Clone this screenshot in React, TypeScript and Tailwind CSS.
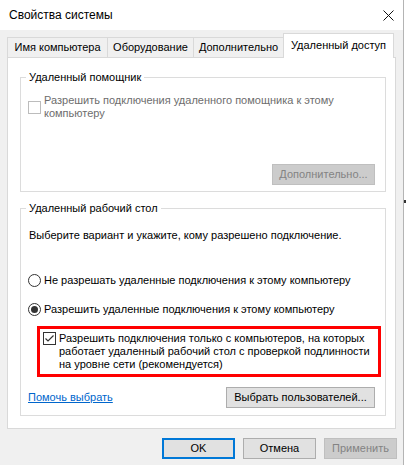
import React from "react";

const font = { fontFamily: '"Liberation Sans", Arial, sans-serif' };

function CheckBox({ checked, disabled }: { checked?: boolean; disabled?: boolean }) {
  return (
    <div
      className={`w-[13px] h-[13px] shrink-0 border bg-white flex items-center justify-center ${
        disabled ? "border-[#bcbcbc]" : "border-[#333333]"
      }`}
    >
      {checked && (
        <svg width="11" height="11" viewBox="0 0 11 11">
          <path d="M1.5 5.5 L4 8 L9.5 2.5" fill="none" stroke="#333333" strokeWidth="1.2" />
        </svg>
      )}
    </div>
  );
}

function Radio({ checked }: { checked?: boolean }) {
  return (
    <div className="w-[13px] h-[13px] shrink-0 rounded-full border border-[#333333] bg-white flex items-center justify-center">
      {checked && <div className="w-[7px] h-[7px] rounded-full bg-[#333333]" />}
    </div>
  );
}

export default function App() {
  return (
    <div className="w-[406px] h-[465px] flex overflow-hidden text-[11px] leading-[13px] text-black" style={font}>
      <div className="w-[404px] h-[465px] border-r border-[#b4b4b4] flex flex-col bg-[#f0f0f0]">
        {/* Title bar */}
        <div className="h-[30px] bg-white flex items-center justify-between pl-[9px] pr-[9px]">
          <span className="text-[12px] leading-[15px]">Свойства системы</span>
          <svg width="11" height="11" viewBox="0 0 11 11">
            <path d="M0.5 0.5 L10.5 10.5 M10.5 0.5 L0.5 10.5" stroke="#111" strokeWidth="1" />
          </svg>
        </div>

        {/* Body */}
        <div className="flex-1 pl-[7px] pt-[3px]">
          {/* Tabs */}
          <div className="flex items-end h-[24px]">
            <div className="w-[101px] h-[20px] border-l border-t border-r border-[#d9d9d9] flex items-center justify-center">
              Имя компьютера
            </div>
            <div className="w-[86px] h-[20px] border-t border-r border-[#d9d9d9] flex items-center justify-center">
              Оборудование
            </div>
            <div className="w-[89px] h-[20px] border-t border-[#d9d9d9] flex items-center justify-center">
              Дополнительно
            </div>
            <div className="w-[111px] h-[25px] -mb-px relative z-10 bg-white border-l border-t border-r border-[#d9d9d9] flex items-center justify-center pb-[2px]">
              Удаленный доступ
            </div>
          </div>

          {/* Panel */}
          <div className="w-[389px] bg-white border border-[#d9d9d9] pt-[13px] pl-[12px] pr-[9px] pb-[12px]">
            {/* Group 1 */}
            <fieldset className="border border-[#dcdcdc] pb-[6px]">
              <legend className="ml-[5px] px-[3px]">Удаленный помощник</legend>
              <div className="mt-[10px] pl-[7px] flex items-center gap-[3px] text-[#6d6d6d]">
                <CheckBox disabled />
                <div>
                  Разрешить подключения удаленного помощника к этому
                  <br />
                  компьютеру
                </div>
              </div>
              <div className="mt-[44px] flex justify-end pr-[10px]">
                <div className="w-[103px] h-[21px] bg-[#cccccc] border border-[#bfbfbf] text-[#838383] flex items-center justify-center">
                  Дополнительно...
                </div>
              </div>
            </fieldset>

            {/* Group 2 */}
            <fieldset className="mt-[10px] border border-[#dcdcdc] pb-[7px]">
              <legend className="ml-[5px] px-[3px]">Удаленный рабочий стол</legend>
              <div className="mt-[14px] pl-[8px]">
                Выберите вариант и укажите, кому разрешено подключение.
              </div>
              <div className="mt-[32px] pl-[7px] flex items-center gap-[3px]">
                <Radio />
                <span>Не разрешать удаленные подключения к этому компьютеру</span>
              </div>
              <div className="mt-[16px] pl-[7px] flex items-center gap-[3px]">
                <Radio checked />
                <span>Разрешить удаленные подключения к этому компьютеру</span>
              </div>
              <div className="mt-[10px] ml-[16px] w-[344px] border-[3px] border-[#ff0000] p-[3px] flex items-start gap-[3px]">
                <CheckBox checked />
                <div>
                  Разрешить подключения только с компьютеров, на которых
                  <br />
                  работает удаленный рабочий стол с проверкой подлинности
                  <br />
                  на уровне сети (рекомендуется)
                </div>
              </div>
              <div className="mt-[10px] pl-[7px] pr-[10px] flex items-center justify-between">
                <span className="text-[#0066cc] underline">Помочь выбрать</span>
                <div className="w-[149px] h-[21px] bg-[#e1e1e1] border border-[#adadad] flex items-center justify-center">
                  Выбрать пользователей...
                </div>
              </div>
            </fieldset>
          </div>

          {/* Bottom buttons */}
          <div className="mt-[9px] flex justify-end gap-[8px] pr-[6px]">
            <div className="w-[73px] h-[21px] bg-[#e1e1e1] border-2 border-[#0078d7] flex items-center justify-center">
              OK
            </div>
            <div className="w-[73px] h-[21px] bg-[#e1e1e1] border border-[#adadad] flex items-center justify-center">
              Отмена
            </div>
            <div className="w-[73px] h-[21px] bg-[#cccccc] border border-[#bfbfbf] text-[#838383] flex items-center justify-center">
              Применить
            </div>
          </div>
        </div>
      </div>
      <div className="flex-1 bg-white flex flex-col">
        <div className="h-[200px]" />
        <div className="h-[3px] bg-[#333]" />
      </div>
    </div>
  );
}
